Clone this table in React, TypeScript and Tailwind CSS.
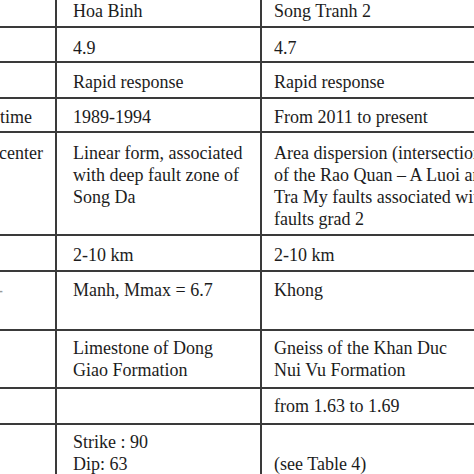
const rows: {
  h: string;
  pad: string;
  left?: React.ReactNode;
  mid: string[];
  right: string[];
  rightPad?: string;
}[] = [
  { h: "h-[28px]", pad: "pt-0", mid: ["Hoa Binh"], right: ["Song Tranh 2"] },
  { h: "h-[35px]", pad: "pt-[9px]", mid: ["4.9"], right: ["4.7"] },
  { h: "h-[36px]", pad: "pt-[8px]", mid: ["Rapid response"], right: ["Rapid response"] },
  { h: "h-[34px]", pad: "pt-[7px]", left: "time", mid: ["1989-1994"], right: ["From 2011 to present"] },
  {
    h: "h-[103px]",
    pad: "pt-[9px]",
    left: "center",
    mid: ["Linear form, associated", "with deep fault zone of", "Song Da"],
    right: [
      "Area dispersion (intersection",
      "of the Rao Quan – A Luoi and",
      "Tra My faults associated with",
      "faults grad 2",
    ],
  },
  { h: "h-[36px]", pad: "pt-[8px]", mid: ["2-10 km"], right: ["2-10 km"] },
  { h: "h-[59px]", pad: "pt-[7px]", left: "-", mid: ["Manh, Mmax = 6.7"], right: ["Khong"] },
  {
    h: "h-[58px]",
    pad: "pt-[6px]",
    mid: ["Limestone of Dong", "Giao Formation"],
    right: ["Gneiss of the Khan Duc", "Nui Vu Formation"],
  },
  { h: "h-[36px]", pad: "pt-[6px]", mid: [], right: ["from 1.63 to 1.69"] },
  {
    h: "h-[80px]",
    pad: "pt-[6px]",
    mid: ["Strike : 90", "Dip: 63", "Rake: 78"],
    right: ["(see Table 4)"],
    rightPad: "pt-[28px]",
  },
];

const Lines = ({ items }: { items: string[] }) => (
  <>
    {items.map((t) => (
      <div key={t} className="whitespace-nowrap">
        {t}
      </div>
    ))}
  </>
);

export default function App() {
  return (
    <div
      className="w-[474px] h-[474px] overflow-hidden bg-white text-[#1c1c1c] text-[18px] leading-[22px]"
      style={{ fontFamily: '"Liberation Serif", "Times New Roman", serif' }}
    >
      <div className="flex flex-col w-[560px]">
        {rows.map((r, i) => (
          <div
            key={i}
            className={`flex shrink-0 ${r.h} ${i < rows.length - 1 ? "border-b-2 border-[#3a3a3a]" : ""}`}
          >
            <div className={`w-[57px] shrink-0 overflow-hidden border-r-2 border-[#3a3a3a] ${r.pad}`}>
              {r.left && (
                <div className={`whitespace-nowrap ${r.left === "-" ? "-ml-[3px] text-[#9a9a9a]" : r.left === "center" ? "-ml-[1px]" : "ml-0"}`}>
                  {r.left}
                </div>
              )}
            </div>
            <div className={`w-[205px] shrink-0 overflow-hidden border-r-2 border-[#3a3a3a] pl-[16px] ${r.pad}`}>
              <Lines items={r.mid} />
            </div>
            <div className={`flex-1 overflow-hidden pl-[12px] ${r.rightPad ?? r.pad}`}>
              <Lines items={r.right} />
            </div>
          </div>
        ))}
      </div>
    </div>
  );
}
